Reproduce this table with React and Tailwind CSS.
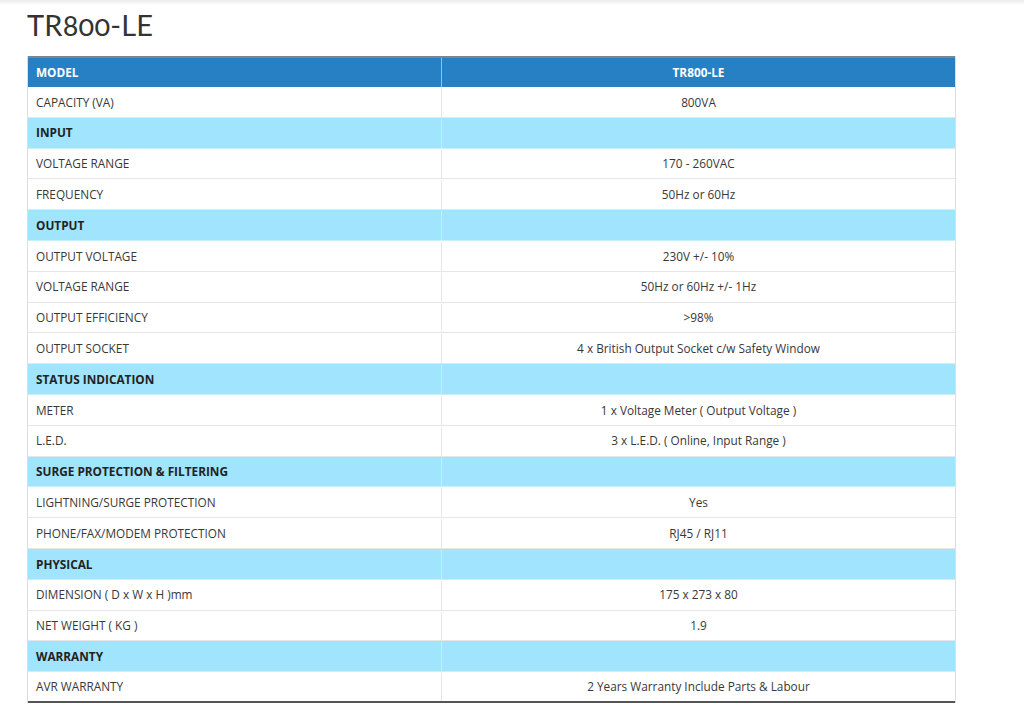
import React from "react";

const rows = [
  { t: "h", l: "MODEL", r: "TR800-LE" },
  { l: "CAPACITY (VA)", r: "800VA" },
  { t: "s", l: "INPUT" },
  { l: "VOLTAGE RANGE", r: "170 - 260VAC" },
  { l: "FREQUENCY", r: "50Hz or 60Hz" },
  { t: "s", l: "OUTPUT" },
  { l: "OUTPUT VOLTAGE", r: "230V +/- 10%" },
  { l: "VOLTAGE RANGE", r: "50Hz or 60Hz +/- 1Hz" },
  { l: "OUTPUT EFFICIENCY", r: ">98%" },
  { l: "OUTPUT SOCKET", r: "4 x British Output Socket c/w Safety Window" },
  { t: "s", l: "STATUS INDICATION" },
  { l: "METER", r: "1 x Voltage Meter ( Output Voltage )" },
  { l: "L.E.D.", r: "3 x L.E.D. ( Online, Input Range )" },
  { t: "s", l: "SURGE PROTECTION & FILTERING" },
  { l: "LIGHTNING/SURGE PROTECTION", r: "Yes" },
  { l: "PHONE/FAX/MODEM PROTECTION", r: "RJ45 / RJ11" },
  { t: "s", l: "PHYSICAL" },
  { l: "DIMENSION ( D x W x H )mm", r: "175 x 273 x 80" },
  { l: "NET WEIGHT ( KG )", r: "1.9" },
  { t: "s", l: "WARRANTY" },
  { l: "AVR WARRANTY", r: "2 Years Warranty Include Parts & Labour" },
];

function Row({ row, last }) {
  if (row.t === "h") {
    return (
      <div className="flex h-[31px] bg-[#2680c3] border-t-2 border-[#7a858e] text-white font-bold">
        <div className="w-[414px] flex items-center pl-[8px] border-r border-[#8fc4e8]">{row.l}</div>
        <div className="flex-1 flex items-center justify-center">{row.r}</div>
      </div>
    );
  }
  if (row.t === "s") {
    return (
      <div className="flex h-[30.8px] pt-[1px] bg-[#a0e5fd] border-b border-[#c9effc] text-[#222] font-bold">
        <div className="w-[414px] flex items-center pl-[8px] border-r border-[#c6eefc]">{row.l}</div>
        <div className="flex-1" />
      </div>
    );
  }
  return (
    <div
      className={
        "flex h-[30.8px] pt-[1px] bg-white text-[#383838] " +
        (last ? "border-b-2 border-[#555]" : "border-b border-[#e6e6e6]")
      }
    >
      <div className="w-[414px] flex items-center pl-[8px] border-r border-[#e6e6e6]">{row.l}</div>
      <div className="flex-1 flex items-center justify-center">{row.r}</div>
    </div>
  );
}

export default function App() {
  return (
    <div className="bg-white min-h-[713px] w-[1024px] overflow-hidden">
      <div className="h-[5px] bg-gradient-to-b from-[#ececec] to-white" />
      <div className="pl-[27px]">
        <h1
          className="font-['Lato',sans-serif] text-[29px] leading-[34px] text-[#333] mt-[3px] mb-[14px] tracking-[0.2px]"
          style={{ fontVariantNumeric: "oldstyle-nums" }}
        >
          TR800-LE
        </h1>
        <div className="w-[929px] font-['Open_Sans',sans-serif] text-[11.8px] border-l border-r border-[#dedede]">
          {rows.map((r, i) => (
            <Row key={i} row={r} last={i === rows.length - 1} />
          ))}
        </div>
      </div>
    </div>
  );
}
